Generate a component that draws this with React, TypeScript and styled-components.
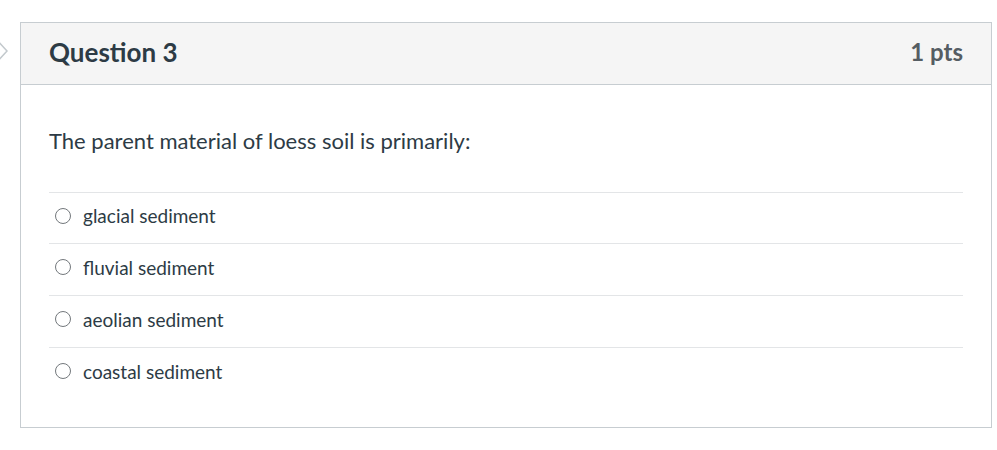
import { styled, createGlobalStyle } from "styled-components";

const GlobalStyle = createGlobalStyle`
  body {
    margin: 0;
    background: #ffffff;
    font-family: Lato, "Open Sans", sans-serif;
  }
`;

const Page = styled.div`
  display: flex;
  align-items: flex-start;
  padding-top: 22px;
  width: 997px;
  height: 450px;
  box-sizing: border-box;
  position: relative;
`;

const Flag = styled.div`
  position: absolute;
  left: -5px;
  top: 38px;
  width: 14px;
  height: 26px;
`;

const Card = styled.div`
  margin-left: 20px;
  width: 972px;
  border: 1px solid #c7cdd1;
  box-sizing: border-box;
`;

const Header = styled.div`
  display: flex;
  justify-content: space-between;
  align-items: center;
  height: 62px;
  padding: 0 28px 4px 28px;
  box-sizing: border-box;
  background: #f5f5f5;
  border-bottom: 1px solid #c7cdd1;
`;

const Title = styled.h2`
  margin: 0;
  font-size: 26px;
  font-weight: 700;
  color: #2d3b45;
`;

const Points = styled.div`
  font-size: 24px;
  font-weight: 700;
  color: #555d63;
`;

const Body = styled.div`
  padding: 43px 28px 28px 28px;
`;

const Prompt = styled.p`
  margin: 0 0 38px 0;
  font-size: 22px;
  color: #2d3b45;
  line-height: 1.2;
`;

const Answers = styled.div`
  display: flex;
  flex-direction: column;
`;

const Answer = styled.label`
  display: flex;
  align-items: center;
  height: 51px;
  padding: 0 0 5px 6px;
  box-sizing: border-box;
  border-top: 1px solid #e3e5e7;
  font-size: 19px;
  color: #2d3b45;
  gap: 12px;
  &:not(:first-child) {
    height: 52px;
  }
`;

const Radio = styled.span`
  width: 16px;
  height: 16px;
  border-radius: 50%;
  border: 1.5px solid #73787c;
  box-sizing: border-box;
  background: #fff;
  flex-shrink: 0;
`;

const options = [
  "glacial sediment",
  "fluvial sediment",
  "aeolian sediment",
  "coastal sediment",
];

export default function App() {
  return (
    <>
      <GlobalStyle />
      <Page>
        <Flag>
          <svg width="14" height="26" viewBox="0 0 14 26">
            <path d="M2 2 L12 13 L2 24" fill="none" stroke="#c3c9cd" strokeWidth="1.5" />
          </svg>
        </Flag>
        <Card>
          <Header>
            <Title>Question 3</Title>
            <Points>1 pts</Points>
          </Header>
          <Body>
            <Prompt>The parent material of loess soil is primarily:</Prompt>
            <Answers>
              {options.map((o) => (
                <Answer key={o}>
                  <Radio />
                  {o}
                </Answer>
              ))}
            </Answers>
          </Body>
        </Card>
      </Page>
    </>
  );
}
